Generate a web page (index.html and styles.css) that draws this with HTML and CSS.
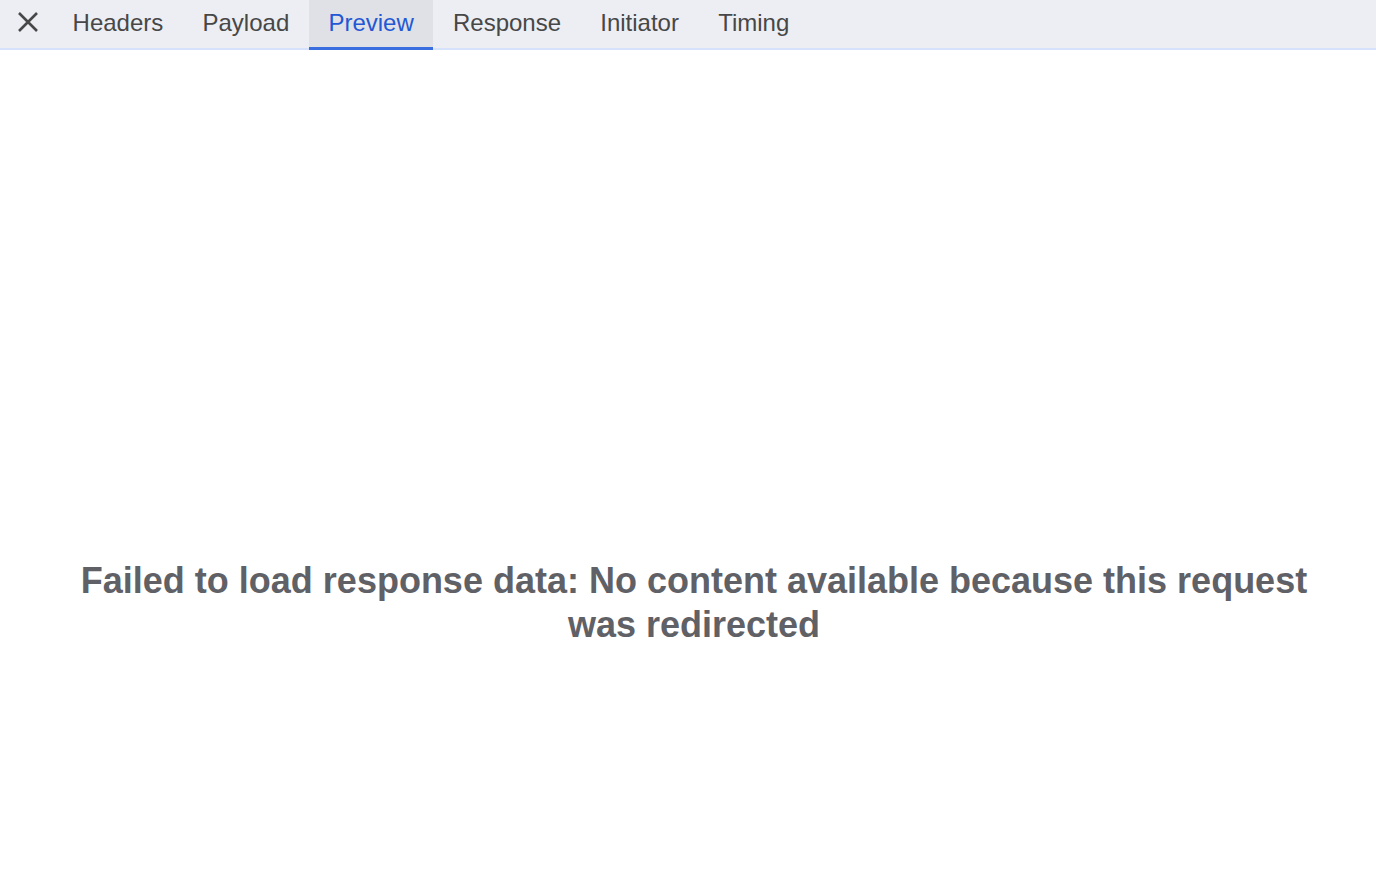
FILE: index.html
```html
<!DOCTYPE html>
<html>
<head>
<meta charset="utf-8">
<link rel="stylesheet" href="styles.css">
</head>
<body>
<div class="tabbar">
  <button class="close" aria-label="Close">
    <svg width="22" height="22" viewBox="0 0 22 22"><path d="M2 2 L20 20 M20 2 L2 20" stroke="#474747" stroke-width="2.6" fill="none"/></svg>
  </button>
  <div class="tab">Headers</div>
  <div class="tab">Payload</div>
  <div class="tab active">Preview</div>
  <div class="tab">Response</div>
  <div class="tab">Initiator</div>
  <div class="tab">Timing</div>
</div>
<div class="content">
  <div class="message">Failed to load response data: No content available because this request was redirected</div>
</div>
</body>
</html>
```
FILE: styles.css
```css
html, body {
  margin: 0;
  padding: 0;
  background: #ffffff;
  font-family: "Liberation Sans", Arial, sans-serif;
}
.tabbar {
  display: flex;
  align-items: stretch;
  height: 48px;
  background: #edeef3;
  border-bottom: 2px solid #d6e2fb;
}
.close {
  width: 54px;
  border: none;
  background: transparent;
  padding: 0 0 0 17px;
  display: flex;
  align-items: center;
  justify-content: flex-start;
  margin-right: -1px;
}
.close svg {
  display: block;
  margin-top: -4px;
}
.tab {
  padding: 1px 19.6px 0;
  font-size: 24px;
  line-height: 44px;
  color: #474747;
  margin-bottom: -2px;
  border-bottom: 3px solid transparent;
  box-sizing: border-box;
  height: 50px;
}
.tab.active {
  background: #dfe1e6;
  color: #2358d4;
  border-bottom-color: #3a6de0;
}
.content {
  height: 846px;
  box-sizing: border-box;
  padding: 509px 60px 0 72px;
}
.message {
  text-align: center;
  font-weight: bold;
  font-size: 36px;
  line-height: 44px;
  color: #5f6166;
}
```
